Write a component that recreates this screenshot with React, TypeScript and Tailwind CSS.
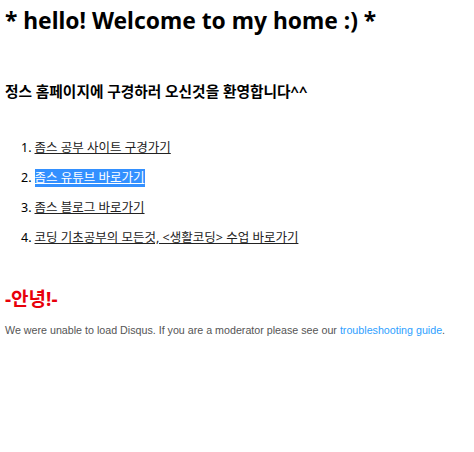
export default function App() {
  const links = [
    "좀스 공부 사이트 구경가기",
    "좀스 유튜브 바로가기",
    "좀스 블로그 바로가기",
    "코딩 기초공부의 모든것, <생활코딩> 수업 바로가기",
  ];

  return (
    <div
      className="min-h-[452px] bg-white px-[5px] text-black"
      style={{ fontFamily: '"Noto Sans", "Noto Sans CJK KR", sans-serif' }}
    >
      <h1 className="pt-[6px] text-[22.8px] font-bold leading-[30px]">
        * hello! Welcome to my home :) *
      </h1>

      <h3 className="mt-[45px] text-[14.7px] font-bold leading-[20px]">
        정스 홈페이지에 구경하러 오신것을 환영합니다^^
      </h3>

      <ol className="mt-[38px] flex flex-col gap-[12px] pl-[16px] text-[12.5px] leading-[18px]">
        {links.map((label, i) => (
          <li key={label} className="flex gap-[3px]">
            <span>{i + 1}.</span>
            <a
              href="#"
              className={
                i === 1
                  ? "bg-[#3390ff] text-white underline"
                  : "text-[#222] underline"
              }
            >
              {label}
            </a>
          </li>
        ))}
      </ol>

      <h2 className="mt-[39px] text-[19px] font-bold leading-[26px] text-[#e8000b]">
        -안녕!-
      </h2>

      <p
        className="mt-[10px] text-[10.7px] leading-[16px] text-[#555]"
        style={{ fontFamily: '"Liberation Sans", Arial, sans-serif' }}
      >
        We were unable to load Disqus. If you are a moderator please see our{" "}
        <a href="#" className="text-[#2e9fff]">
          troubleshooting guide
        </a>
        .
      </p>
    </div>
  );
}
